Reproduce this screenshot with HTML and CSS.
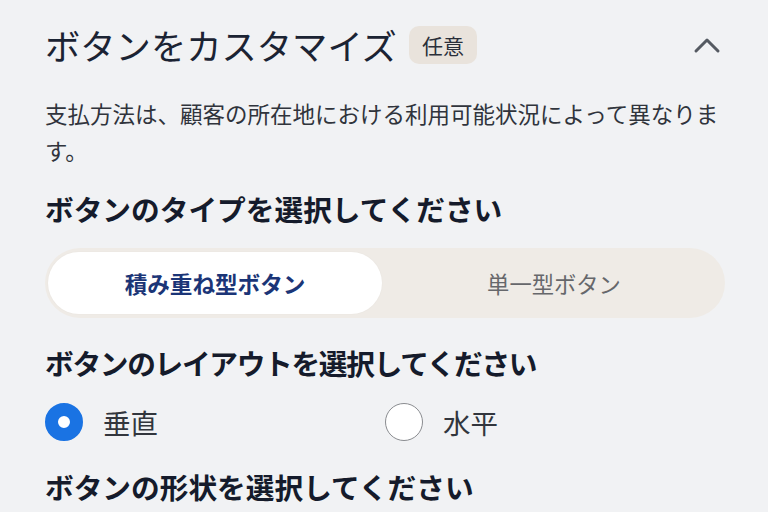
FILE: index.html
```html
<!DOCTYPE html>
<html lang="ja">
<head>
<meta charset="utf-8">
<link rel="stylesheet" href="styles.css">
</head>
<body>
<div class="page">
  <div class="header">
    <h1 class="title">ボタンをカスタマイズ</h1>
    <span class="badge">任意</span>
    <svg class="chevron" width="28" height="18" viewBox="0 0 28 18"><path d="M3 15 L14 4 L25 15" fill="none" stroke="#555a62" stroke-width="3" stroke-linecap="round" stroke-linejoin="round"/></svg>
  </div>
  <p class="desc">支払方法は、顧客の所在地における利用可能状況によって異なります。</p>
  <h2 class="heading h-type">ボタンのタイプを選択してください</h2>
  <div class="segment">
    <div class="seg-item active">積み重ね型ボタン</div>
    <div class="seg-item">単一型ボタン</div>
  </div>
  <h2 class="heading h-layout">ボタンのレイアウトを選択してください</h2>
  <div class="radios">
    <label class="radio"><span class="dot checked"></span><span class="rlabel">垂直</span></label>
    <label class="radio"><span class="dot"></span><span class="rlabel">水平</span></label>
  </div>
  <h2 class="heading h-shape">ボタンの形状を選択してください</h2>
</div>
</body>
</html>
```
FILE: styles.css
```css
* { box-sizing: border-box; }
html, body {
  margin: 0;
  background: #f1f2f4;
  font-family: "Noto Sans CJK JP", "Noto Sans", sans-serif;
}
.page {
  padding: 20px 43px 0 45px;
}
.header {
  display: flex;
  align-items: center;
  height: 50px;
}
.title {
  margin: 0;
  font-size: 35.3px;
  font-weight: 400;
  color: #1b2333;
  line-height: 50px;
}
.badge {
  margin-left: 12px;
  background: #e9e3dc;
  color: #2a2f3a;
  font-size: 21px;
  line-height: 38px;
  height: 38px;
  padding: 0 13px;
  border-radius: 10px;
}
.chevron {
  margin-left: auto;
  margin-right: 4px;
}
.desc {
  margin: 25px 0 0;
  font-size: 22.5px;
  line-height: 37px;
  color: #30343c;
}
.heading {
  margin: 0;
  font-size: 28.7px;
  font-weight: 700;
  line-height: 40px;
  color: #151b2b;
}
.h-type { margin-top: 20px; }
.h-layout { margin-top: 25px; letter-spacing: -1.3px; }
.h-shape { margin-top: 25px; }
.segment {
  margin-top: 19px;
  width: 680px;
  height: 70px;
  padding: 4px 3px;
  background: #efebe6;
  border-radius: 35px;
  display: grid;
  grid-template-columns: 334px 1fr;
}
.seg-item {
  display: flex;
  align-items: center;
  justify-content: center;
  font-size: 22.3px;
  color: #66676b;
  border-radius: 31px;
}
.seg-item.active {
  background: #ffffff;
  color: #1b3577;
  font-weight: 700;
  font-size: 22.6px;
  box-shadow: 0 0 2px rgba(0,0,0,0.04);
}
.seg-item:not(.active) { padding-left: 4px; }
.radios {
  margin-top: 19px;
  width: 680px;
  height: 40px;
  display: grid;
  grid-template-columns: 1fr 1fr;
}
.radio {
  display: flex;
  align-items: center;
  gap: 20px;
}
.dot {
  width: 38px;
  height: 38px;
  border-radius: 50%;
  background: #fff;
  border: 1.5px solid #8a8c90;
  flex: none;
}
.dot.checked {
  background: #fff;
  border: 13px solid #1a73e3;
}
.rlabel {
  font-size: 27.5px;
  color: #32363d;
  line-height: 40px;
}
```
